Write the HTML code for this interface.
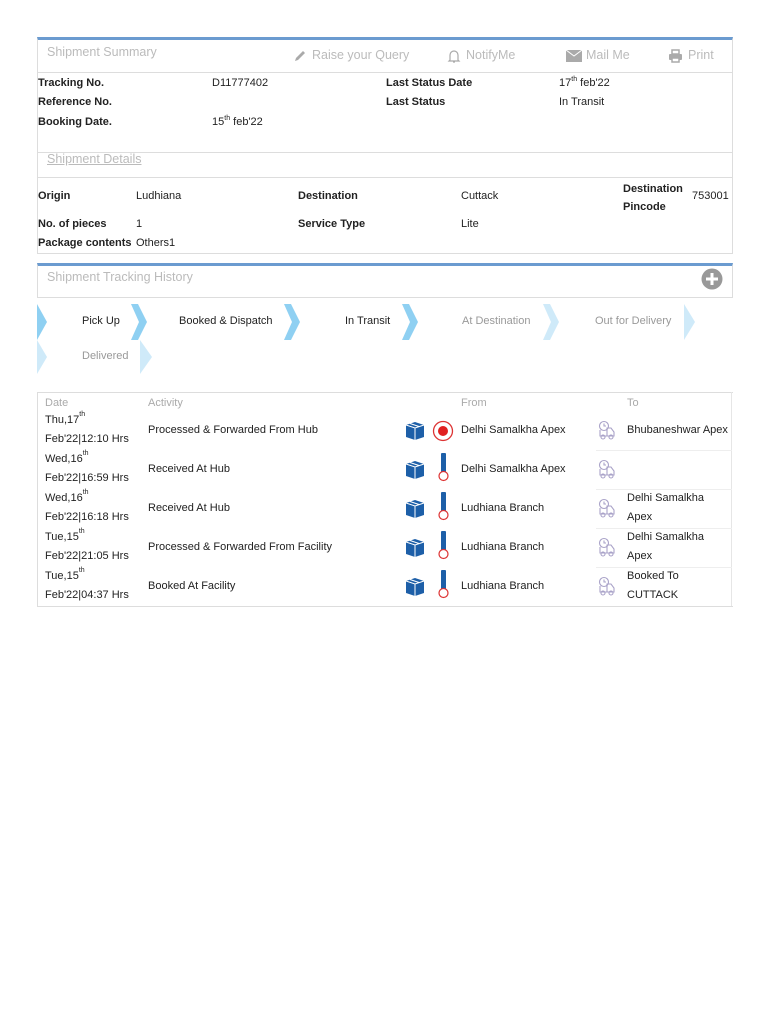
<!DOCTYPE html>
<html><head><meta charset="utf-8"><style>
*{margin:0;padding:0;box-sizing:border-box}
body{width:768px;height:1024px;background:#fff;font-family:"Liberation Sans",Arial,sans-serif;font-size:11px;color:#222;position:relative;overflow:hidden}
.a{position:absolute;white-space:nowrap;line-height:14px}
.b{font-weight:bold}
.g{color:#999}
.h{color:#aaa}
.lt{color:#bbb;font-size:12.5px}
.box{position:absolute;border:1px solid #ddd}
sup{font-size:7px;vertical-align:top;line-height:8px}
.d{line-height:19px}
</style></head><body>
<div class="box" style="left:37px;top:37px;width:696px;height:36px;border-top:3px solid #6b9bd0"></div>
<div class="box" style="left:37px;top:73px;width:696px;height:181px;border-top:none"></div>
<div class="a lt" style="left:47px;top:45px">Shipment Summary</div>
<svg class="a" style="left:293px;top:49px" width="14" height="14" viewBox="0 0 14 14"><path d="M2 12l1-3 7-7 2 2-7 7z" fill="#aaa"/></svg>
<div class="a lt" style="left:312px;top:48px">Raise your Query</div>
<svg class="a" style="left:446px;top:48px" width="16" height="16" viewBox="0 0 16 16"><path d="M4 12V7a4 4 0 018 0v5l1 1H3z M7 14h2" fill="none" stroke="#aaa" stroke-width="1.2"/></svg>
<div class="a lt" style="left:466px;top:48px">NotifyMe</div>
<svg class="a" style="left:566px;top:50px" width="16" height="12" viewBox="0 0 16 12"><rect width="16" height="12" fill="#aaa"/><path d="M0 0l8 6 8-6" stroke="#fff" fill="none"/></svg>
<div class="a lt" style="left:586px;top:48px">Mail Me</div>
<svg class="a" style="left:668px;top:49px" width="15" height="14" viewBox="0 0 15 14"><rect x="4" y="1" width="7" height="4" fill="none" stroke="#aaa" stroke-width="1.5"/><rect x="1" y="5" width="13" height="6" rx="1" fill="#aaa"/><rect x="4" y="9" width="7" height="4" fill="#fff" stroke="#aaa" stroke-width="1.5"/></svg>
<div class="a lt" style="left:688px;top:48px">Print</div>

<div class="a b" style="left:38px;top:76px">Tracking No.</div>
<div class="a" style="left:212px;top:76px">D11777402</div>
<div class="a b" style="left:386px;top:76px">Last Status Date</div>
<div class="a" style="left:559px;top:76px">17<sup>th</sup> feb'22</div>
<div class="a b" style="left:38px;top:95px">Reference No.</div>
<div class="a b" style="left:386px;top:95px">Last Status</div>
<div class="a" style="left:559px;top:95px">In Transit</div>
<div class="a b" style="left:38px;top:115px">Booking Date.</div>
<div class="a" style="left:212px;top:115px">15<sup>th</sup> feb'22</div>

<div class="box" style="left:37px;top:152px;width:696px;height:26px"></div>
<div class="a lt" style="left:47px;top:152px;text-decoration:underline">Shipment Details</div>
<div class="a b" style="left:38px;top:189px">Origin</div>
<div class="a" style="left:136px;top:189px">Ludhiana</div>
<div class="a b" style="left:298px;top:189px">Destination</div>
<div class="a" style="left:461px;top:189px">Cuttack</div>
<div class="a b" style="left:623px;top:180px;line-height:18px">Destination<br>Pincode</div>
<div class="a" style="left:692px;top:189px">753001</div>
<div class="a b" style="left:38px;top:217px">No. of pieces</div>
<div class="a" style="left:136px;top:217px">1</div>
<div class="a b" style="left:298px;top:217px">Service Type</div>
<div class="a" style="left:461px;top:217px">Lite</div>
<div class="a b" style="left:38px;top:236px">Package contents</div>
<div class="a" style="left:136px;top:236px">Others1</div>

<div class="box" style="left:37px;top:263px;width:696px;height:35px;border-top:3px solid #6b9bd0"></div>
<div class="a lt" style="left:47px;top:270px">Shipment Tracking History</div>
<svg class="a" style="left:701px;top:268px" width="22" height="22" viewBox="0 0 22 22"><circle cx="11" cy="11" r="10.5" fill="#999"/><path d="M11 5v12M5 11h12" stroke="#fff" stroke-width="3"/></svg>

<svg class="a" style="left:0;top:300px" width="768" height="80">
<g fill="#8fd0f2">
<polygon points="37,4 47,22 37,40"/>
<polygon points="131,4 138,4 147,22 138,40 131,40 139,22"/>
<polygon points="284,4 291,4 300,22 291,40 284,40 292,22"/>
<polygon points="402,4 409,4 418,22 409,40 402,40 410,22"/>
</g>
<g fill="#cfeaf9">
<polygon points="543,4 550,4 559,22 550,40 543,40 551,22"/>
<polygon points="684,4 695,22 684,40"/>
<polygon points="37,40 47,57 37,74"/>
<polygon points="140,40 152,57 140,74"/>
</g>
</svg>
<div class="a" style="left:82px;top:314px">Pick Up</div>
<div class="a" style="left:179px;top:314px">Booked &amp; Dispatch</div>
<div class="a" style="left:345px;top:314px">In Transit</div>
<div class="a g" style="left:462px;top:314px">At Destination</div>
<div class="a g" style="left:595px;top:314px">Out for Delivery</div>
<div class="a g" style="left:82px;top:349px">Delivered</div>

<div class="box" style="left:37px;top:392px;width:696px;height:215px;border-right:none"></div>
<div style="position:absolute;left:731px;top:392px;width:1px;height:214px;background:#e6e6e6"></div>
<div class="a h" style="left:45px;top:396px">Date</div>
<div class="a h" style="left:148px;top:396px">Activity</div>
<div class="a h" style="left:461px;top:396px">From</div>
<div class="a h" style="left:627px;top:396px">To</div>

<svg width="0" height="0" style="position:absolute"><defs>
<g id="bx"><path d="M1 5l9-3 9 3v12l-9 3-9-3z" fill="#1d5fa8"/><path d="M1 5l9 3 9-3M10 8v12M5 3.5l9 3" stroke="#fff" stroke-width="1" fill="none"/></g>
<g id="pin"><rect x="6" y="0" width="5" height="20" rx="1" fill="#1d5fa8"/><circle cx="8.5" cy="23" r="4.5" fill="#fff" stroke="#d33" stroke-width="1.2"/></g>
<g id="tr"><g fill="none" stroke="#a9a2c8" stroke-width="1.1"><circle cx="6" cy="6" r="4.5"/><path d="M6 3.5V6h2"/><path d="M2 10v6h14v-4l-3-4h-4v8"/><circle cx="5" cy="17" r="2"/><circle cx="13" cy="17" r="2"/></g></g>
</defs></svg>

<div class="a d" style="left:45px;top:411px">Thu,17<sup>th</sup><br>Feb'22|12:10 Hrs</div>
<div class="a" style="left:148px;top:423px">Processed &amp; Forwarded From Hub</div>
<svg class="a" style="left:405px;top:420px" width="20" height="22"><use href="#bx"/></svg>
<svg class="a" style="left:432px;top:420px" width="22" height="22"><circle cx="11" cy="11" r="9.5" fill="#fff" stroke="#d33" stroke-width="1.3"/><circle cx="11" cy="11" r="5" fill="#e02020"/></svg>
<div class="a" style="left:461px;top:423px">Delhi Samalkha Apex</div>
<svg class="a" style="left:598px;top:420px" width="20" height="21"><use href="#tr"/></svg>
<div class="a" style="left:627px;top:423px">Bhubaneshwar Apex</div>
<div style="position:absolute;left:596px;top:450px;width:136px;height:1px;background:#eee"></div>

<div class="a d" style="left:45px;top:450px">Wed,16<sup>th</sup><br>Feb'22|16:59 Hrs</div>
<div class="a" style="left:148px;top:462px">Received At Hub</div>
<svg class="a" style="left:405px;top:459px" width="20" height="22"><use href="#bx"/></svg>
<svg class="a" style="left:435px;top:453px" width="18" height="29"><use href="#pin"/></svg>
<div class="a" style="left:461px;top:462px">Delhi Samalkha Apex</div>
<svg class="a" style="left:598px;top:459px" width="20" height="21"><use href="#tr"/></svg>
<div style="position:absolute;left:596px;top:489px;width:136px;height:1px;background:#eee"></div>

<div class="a d" style="left:45px;top:489px">Wed,16<sup>th</sup><br>Feb'22|16:18 Hrs</div>
<div class="a" style="left:148px;top:501px">Received At Hub</div>
<svg class="a" style="left:405px;top:498px" width="20" height="22"><use href="#bx"/></svg>
<svg class="a" style="left:435px;top:492px" width="18" height="29"><use href="#pin"/></svg>
<div class="a" style="left:461px;top:501px">Ludhiana Branch</div>
<svg class="a" style="left:598px;top:498px" width="20" height="21"><use href="#tr"/></svg>
<div class="a d" style="left:627px;top:489px">Delhi Samalkha<br>Apex</div>
<div style="position:absolute;left:596px;top:528px;width:136px;height:1px;background:#eee"></div>

<div class="a d" style="left:45px;top:528px">Tue,15<sup>th</sup><br>Feb'22|21:05 Hrs</div>
<div class="a" style="left:148px;top:540px">Processed &amp; Forwarded From Facility</div>
<svg class="a" style="left:405px;top:537px" width="20" height="22"><use href="#bx"/></svg>
<svg class="a" style="left:435px;top:531px" width="18" height="29"><use href="#pin"/></svg>
<div class="a" style="left:461px;top:540px">Ludhiana Branch</div>
<svg class="a" style="left:598px;top:537px" width="20" height="21"><use href="#tr"/></svg>
<div class="a d" style="left:627px;top:528px">Delhi Samalkha<br>Apex</div>
<div style="position:absolute;left:596px;top:567px;width:136px;height:1px;background:#eee"></div>

<div class="a d" style="left:45px;top:567px">Tue,15<sup>th</sup><br>Feb'22|04:37 Hrs</div>
<div class="a" style="left:148px;top:579px">Booked At Facility</div>
<svg class="a" style="left:405px;top:576px" width="20" height="22"><use href="#bx"/></svg>
<svg class="a" style="left:435px;top:570px" width="18" height="29"><use href="#pin"/></svg>
<div class="a" style="left:461px;top:579px">Ludhiana Branch</div>
<svg class="a" style="left:598px;top:576px" width="20" height="21"><use href="#tr"/></svg>
<div class="a d" style="left:627px;top:567px">Booked To<br>CUTTACK</div>
</body></html>
